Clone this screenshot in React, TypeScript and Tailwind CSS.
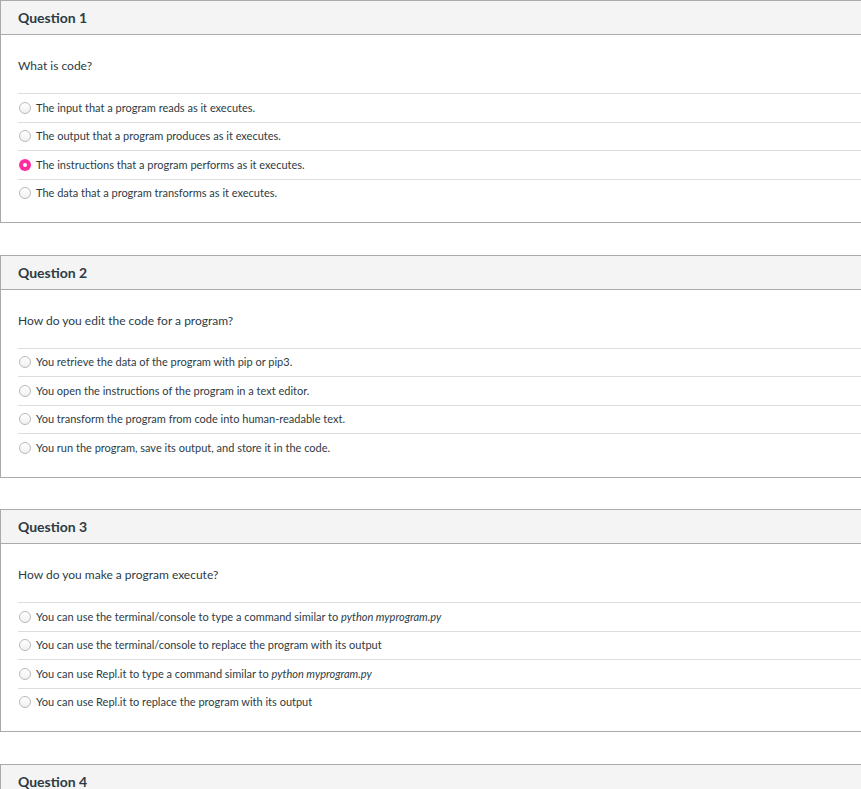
import React from 'react';

type Answer = { text: React.ReactNode; selected?: boolean };

interface QuestionCardProps {
  n: number;
  prompt: string;
  answers: Answer[];
}

const Radio: React.FC<{ selected?: boolean }> = ({ selected }) =>
  selected ? (
    <span className="flex h-[12px] w-[12px] shrink-0 items-center justify-center rounded-full bg-[#ff2d9e]">
      <span className="h-[4px] w-[4px] rounded-full bg-white" />
    </span>
  ) : (
    <span className="h-[12px] w-[12px] shrink-0 rounded-full border border-[#b9b9b9] bg-gradient-to-b from-white to-[#f1f1f1]" />
  );

const QuestionCard: React.FC<QuestionCardProps> = ({ n, prompt, answers }) => (
  <div className="border border-r-0 border-[#aaaaaa] bg-white">
    <div className="flex h-[34px] items-center border-b border-[#aaaaaa] bg-[#f4f4f4] pl-[17px]">
      <h2 className="text-[14px] font-bold text-[#2d3b45]">Question {n}</h2>
    </div>
    <div className="pl-[17px] pt-[21px] pb-[15px]">
      <p className="h-[20px] text-[12px] leading-[20px] text-[#2d3b45]">{prompt}</p>
      <div className="mt-[17px]">
        {answers.map((a, i) => (
          <div
            key={i}
            className="flex h-[28.5px] items-center gap-[5px] border-t border-[#dddddd] pl-[1px] text-[11px] text-[#2d3b45]"
          >
            <Radio selected={a.selected} />
            <span>{a.text}</span>
          </div>
        ))}
      </div>
    </div>
  </div>
);

const py = <em>python myprogram.py</em>;

const questions: QuestionCardProps[] = [
  {
    n: 1,
    prompt: 'What is code?',
    answers: [
      { text: 'The input that a program reads as it executes.' },
      { text: 'The output that a program produces as it executes.' },
      { text: 'The instructions that a program performs as it executes.', selected: true },
      { text: 'The data that a program transforms as it executes.' },
    ],
  },
  {
    n: 2,
    prompt: 'How do you edit the code for a program?',
    answers: [
      { text: 'You retrieve the data of the program with pip or pip3.' },
      { text: 'You open the instructions of the program in a text editor.' },
      { text: 'You transform the program from code into human-readable text.' },
      { text: 'You run the program, save its output, and store it in the code.' },
    ],
  },
  {
    n: 3,
    prompt: 'How do you make a program execute?',
    answers: [
      { text: <>You can use the terminal/console to type a command similar to {py}</> },
      { text: 'You can use the terminal/console to replace the program with its output' },
      { text: <>You can use Repl.it to type a command similar to {py}</> },
      { text: 'You can use Repl.it to replace the program with its output' },
    ],
  },
  {
    n: 4,
    prompt: 'What is a program?',
    answers: [
      { text: 'A set of instructions that a computer performs.' },
      { text: 'A file that stores the output of a computer.' },
    ],
  },
];

export default function App() {
  return (
    <div className="h-[789px] overflow-hidden bg-white font-['Lato','Liberation_Sans',sans-serif]">
      <div className="flex flex-col gap-[31.5px]">
        {questions.map((q) => (
          <QuestionCard key={q.n} {...q} />
        ))}
      </div>
    </div>
  );
}
